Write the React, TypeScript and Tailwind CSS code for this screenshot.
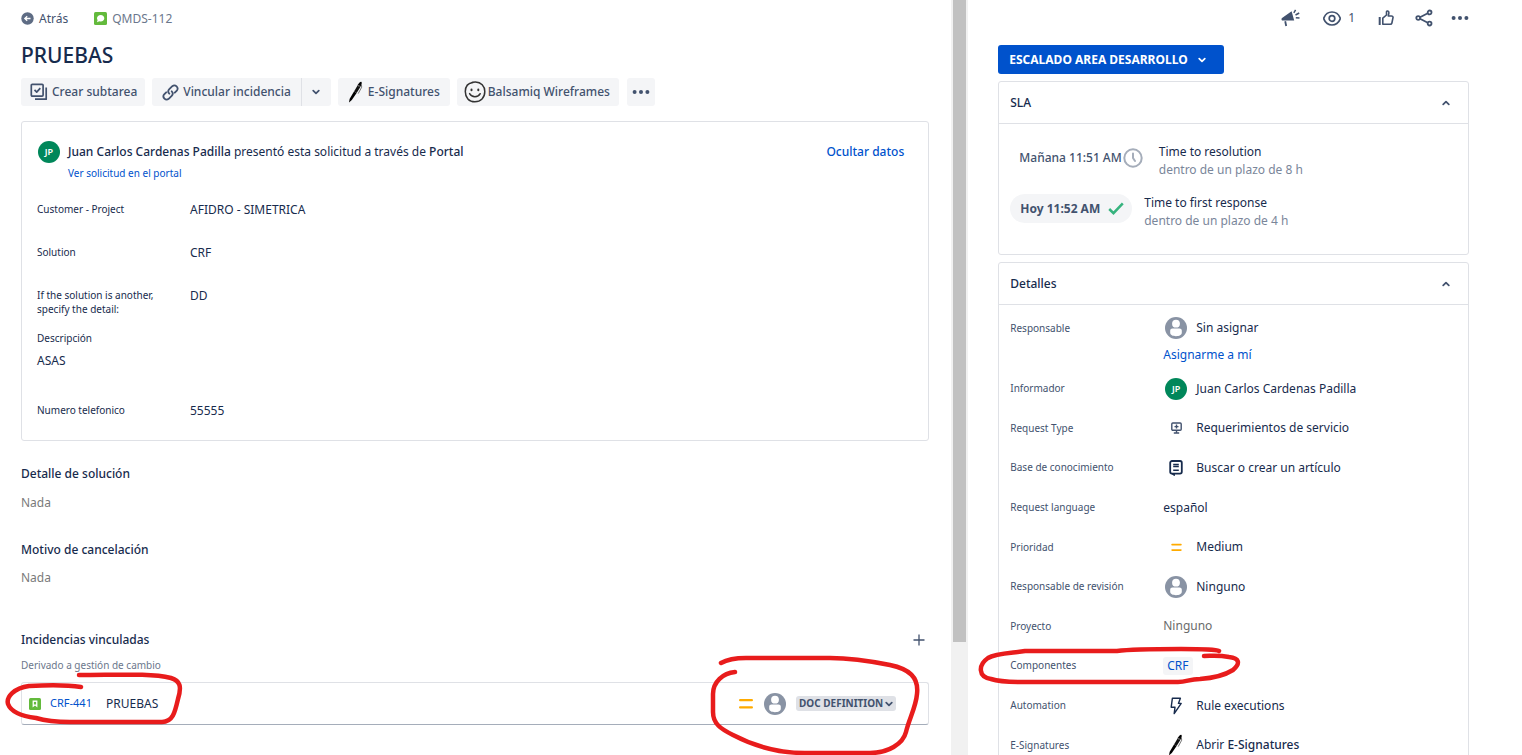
import { useState } from "react";
import type { ReactNode } from "react";

const requestFields = [
  { label: "Customer - Project", value: "AFIDRO - SIMETRICA" },
  { label: "Solution", value: "CRF" },
  { label: "If the solution is another, specify the detail:", value: "DD" },
];

function Chevron({ up = false }: { up?: boolean }) {
  return (
    <svg width="8" height="8" viewBox="0 0 8 8" fill="none" stroke="currentColor" strokeWidth="1.7" strokeLinecap="round" strokeLinejoin="round" aria-hidden="true">
      <path d={up ? "M1.2 5.4 4 2.6l2.8 2.8" : "M1.2 2.6 4 5.4l2.8-2.8"} />
    </svg>
  );
}

function Dots() {
  return (
    <svg width="18" height="6" viewBox="0 0 18 6" fill="currentColor" aria-hidden="true">
      <circle cx="2.6" cy="3" r="2" />
      <circle cx="9" cy="3" r="2" />
      <circle cx="15.4" cy="3" r="2" />
    </svg>
  );
}

function Pen() {
  return (
    <svg width="16" height="22" viewBox="0 0 16 22" aria-hidden="true" className="shrink-0">
      <path d="M1 21.4 1.700 17.800 6 10.600l2.600 1.400-4.800 7z" fill="#000" />
      <path d="M6 10.600 9.400 4.800l2.800 1.400-3.600 5.800z" fill="#111" />
      <path d="M9.400 4.800C10.400 2.400 11.800 1 13.200.8c.8.4.6 1.800.2 3l-1.200 2.400z" fill="#000" />
      <path d="M9.800 4.200 12.600 5.400" stroke="#aaa" strokeWidth=".6" />
      <path d="m13.400 3.600.3 2.600-3.500 6.400" fill="none" stroke="#666" strokeWidth=".9" />
    </svg>
  );
}

function Person() {
  return (
    <svg width="22" height="22" viewBox="0 0 22 22" aria-hidden="true" className="shrink-0">
      <circle cx="11" cy="11" r="11" fill="#8993a4" />
      <circle cx="11" cy="6.700" r="3.900" fill="#fff" />
      <path d="M5.200 13.600c0-1.400 1-2.200 2.300-2.200h7c1.300 0 2.300.8 2.300 2.200v2.200c0 2.200-2.600 3.400-5.800 3.400s-5.800-1.200-5.800-3.400z" fill="#fff" />
    </svg>
  );
}

function Initials() {
  return (
    <span className="flex size-[22px] shrink-0 items-center justify-center rounded-full bg-[#00875a] text-[9px] font-semibold text-white">
      JP
    </span>
  );
}

function Medium({ large = false }: { large?: boolean }) {
  return (
    <svg width={large ? 14 : 11} height={large ? 12 : 9} viewBox="0 0 14 12" stroke="#ffab00" strokeWidth="2.200" strokeLinecap="round" aria-hidden="true">
      <path d="M1.100 2.200h11.800M1.100 9.400h11.800" />
    </svg>
  );
}

function ToolButton({ icon, children, className }: { icon: ReactNode; children: ReactNode; className: string }) {
  return (
    <button type="button" className={`flex h-7 items-center whitespace-nowrap bg-[#f4f5f7] text-[#42526e] hover:bg-[#ebecf0] ${className}`}>
      {icon}
      {children}
    </button>
  );
}

function Panel({ title, children, className = "" }: { title: string; children: ReactNode; className?: string }) {
  const [open, setOpen] = useState(true);

  return (
    <section className={`rounded-[3px] border border-[#dfe1e6] ${className}`}>
      <button
        type="button"
        aria-expanded={open}
        onClick={() => setOpen(!open)}
        className="flex h-[42px] w-full items-center justify-between border-b border-[#dfe1e6] pt-px pr-[18px] pl-[11px] font-medium"
      >
        {title}
        <span className="text-[#42526e]"><Chevron up={open} /></span>
      </button>
      {open && children}
    </section>
  );
}

function Detail({ label, icon, children }: { label: string; icon?: ReactNode; children: ReactNode }) {
  return (
    <div className="flex items-center">
      <dt className="w-[153px] shrink-0 text-[10px] text-[#42526e]">{label}</dt>
      <dd className="flex items-center">
        {icon && <span className="mr-[7px] flex w-[26px] justify-center">{icon}</span>}
        {children}
      </dd>
    </div>
  );
}

function RequestCard() {
  return (
    <section className="mt-[15px] h-80 rounded-[3px] border border-[#dfe1e6] pt-5 pr-6 pl-[15px]">
      <div className="flex h-5 items-center">
        <span className="ml-px"><Initials /></span>
        <p className="ml-2">
          <strong className="font-medium">Juan Carlos Cardenas Padilla</strong> presentó esta solicitud a través de{" "}
          <strong className="font-medium">Portal</strong>
        </p>
        <button type="button" className="ml-auto font-medium text-[#0052cc]">Ocultar datos</button>
      </div>
      <a href="#portal" className="mt-[3px] ml-[31px] block w-fit text-[10px] leading-4 text-[#0052cc]">
        Ver solicitud en el portal
      </a>
      <dl className="mt-[21px]">
        {requestFields.map((field) => (
          <div key={field.label} className="flex h-[43px]">
            <dt className="w-[153px] pr-6 text-[10px] leading-[14px]">{field.label}</dt>
            <dd className="leading-4">{field.value}</dd>
          </div>
        ))}
        <div className="h-[72px]">
          <dt className="text-[10px] leading-[14px]">Descripción</dt>
          <dd className="mt-2 leading-4">ASAS</dd>
        </div>
        <div className="flex">
          <dt className="w-[153px] text-[10px] leading-[14px]">Numero telefonico</dt>
          <dd className="leading-4">55555</dd>
        </div>
      </dl>
    </section>
  );
}

function LinkedIssues() {
  return (
    <section className="mt-[42px]">
      <div className="flex h-5 items-center justify-between">
        <h2 className="font-medium">Incidencias vinculadas</h2>
        <button type="button" aria-label="Vincular incidencia" className="mr-1 text-[#42526e]">
          <svg width="12" height="12" viewBox="0 0 12 12" stroke="currentColor" strokeWidth="1.300" aria-hidden="true">
            <path d="M6 .5v11M.5 6h11" />
          </svg>
        </button>
      </div>
      <h3 className="mt-[7px] text-[10px] leading-4 text-[#6b778c]">Derivado a gestión de cambio</h3>
      <div className="relative mt-[9px] flex h-[43px] items-center rounded-[3px] border border-[#dfe1e6] border-b-[#a5adba] pr-8 pl-[7px]">
        <svg width="12" height="12" viewBox="0 0 12 12" aria-hidden="true">
          <rect width="12" height="12" rx="1.500" fill="#63ba3c" />
          <path d="M3.600 2.500h4.800v7L6 7.500 3.600 9.500z" fill="#fff" />
          <path d="M4.900 3.900h2.200v2.600h-2.200z" fill="#63ba3c" />
        </svg>
        <a href="#CRF-441" className="ml-[9px] w-14 text-[11px] text-[#0052cc]">CRF-441</a>
        <span>PRUEBAS</span>
        <div className="ml-auto flex items-center">
          <Medium large />
          <span className="mr-[10px] ml-[11px]"><Person /></span>
          <button type="button" className="flex h-[15px] items-center gap-[2px] rounded-[3px] bg-[#dfe1e6] px-[3px] text-[10px] font-bold text-[#42526e]">
            DOC DEFINITION
            <Chevron />
          </button>
        </div>
        {/* marker strokes over the linked issue */}
        <svg className="pointer-events-none absolute -top-3 -left-[18px]" width="182" height="56" viewBox="0 0 182 56" fill="none" stroke="#e81c1c" strokeWidth="4.500" strokeLinecap="round" strokeLinejoin="round" aria-hidden="true">
          <path d="M77 16C58 13 42 14 25 15 10 17 2 26 4 33c3 8 13 12 28 14 10 3 22 4 34 4h92c11 0 13-10 16-23 4-13 2-18-7-21-21-5-53-3-92-3" />
        </svg>
        <svg className="pointer-events-none absolute -top-7 right-1" width="214" height="101" viewBox="0 0 214 101" fill="none" stroke="#e81c1c" strokeWidth="4.500" strokeLinecap="round" strokeLinejoin="round" aria-hidden="true">
          <path d="M25 17C13 18 3 27 3 39v18c0 12 8 17 20 23 21 11 43 18 72 18h65c18 0 33-9 36-21 3-13 10-25 11-38 2-17-8-25-27-29-25-5-44-7-60-7H36c-10 0-18 1-25 5" />
        </svg>
      </div>
    </section>
  );
}

function IssueView() {
  return (
    <main className="w-[62.5%] shrink-0 overflow-hidden pt-2 pr-[22px] pl-[21px]">
      <nav className="flex h-5 items-center pt-px">
        <a href="#back" className="flex items-center gap-[5px] text-[#42526e]">
          <svg width="13" height="13" viewBox="0 0 13 13" aria-hidden="true">
            <circle cx="6.500" cy="6.500" r="6.200" fill="#5e6c84" />
            <path d="M9.500 6.500H4M6.200 4.200 3.800 6.500l2.400 2.300" fill="none" stroke="#fff" strokeWidth="1.300" />
          </svg>
          Atrás
        </a>
        <a href="#QMDS-112" className="ml-[26px] flex items-center gap-[5px] text-[#6b778c]">
          <svg width="13" height="13" viewBox="0 0 13 13" aria-hidden="true">
            <rect width="13" height="13" rx="1.500" fill="#63ba3c" />
            <path d="M6.700 3C4.600 3 3 4.400 3 6.200c0 .8.200 1.300.6 1.800L3 10.200l2.300-.9c.4.1.9.2 1.400.2 2.100 0 3.600-1.500 3.600-3.300S8.800 3 6.700 3z" fill="#fff" />
          </svg>
          QMDS-112
        </a>
      </nav>
      <h1 className="mt-[13px] text-[21px] leading-7 font-medium">PRUEBAS</h1>
      <div className="mt-[9px] flex font-medium">
        <ToolButton
          className="rounded-[3px] pr-2 pl-[9px]"
          icon={
            <svg className="mr-1" width="18" height="18" viewBox="0 0 18 18" fill="none" stroke="currentColor" strokeWidth="1.700" strokeLinejoin="round" aria-hidden="true">
              <rect x="1.300" y="1.300" width="11.800" height="11.800" rx="1" />
              <path d="m4.500 6.900 2.200 2.200 3.600-4" />
              <path d="M16.200 4.500v11.700H5" />
            </svg>
          }
        >
          Crear subtarea
        </ToolButton>
        <div className="ml-[7px] flex">
          <ToolButton
            className="rounded-l-[3px] pr-[10px] pl-[10px]"
            icon={
              <svg className="mr-1" width="17" height="17" viewBox="0 0 17 17" fill="none" stroke="currentColor" strokeWidth="1.800" strokeLinecap="round" aria-hidden="true">
                <path d="M7.300 9.700a3.200 3.200 0 0 1 0-4.500l3-3a3.200 3.200 0 0 1 4.500 4.500l-2 2" />
                <path d="M9.700 7.300a3.200 3.200 0 0 1 0 4.500l-3 3a3.200 3.200 0 0 1-4.500-4.500l2-2" />
              </svg>
            }
          >
            Vincular incidencia
          </ToolButton>
          <button type="button" aria-label="Más opciones de vínculo" className="flex h-7 w-[30px] items-center justify-center rounded-r-[3px] border-l border-[#dfe1e6] bg-[#f4f5f7] text-[#42526e]">
            <Chevron />
          </button>
        </div>
        <ToolButton className="ml-[7px] gap-1 rounded-[3px] pr-[10px] pl-[10px]" icon={<Pen />}>
          E-Signatures
        </ToolButton>
        <ToolButton
          className="ml-[7px] gap-[2px] rounded-[3px] pr-[9px] pl-[7px]"
          icon={
            <svg width="22" height="22" viewBox="0 0 22 22" fill="none" stroke="#333" strokeWidth="1.500" strokeLinecap="round" aria-hidden="true">
              <path d="M9 1.500C4 2 1.400 5.500 1.300 10.500 1.300 16.500 5 20.800 10.800 20.800c6 0 10-4 10-10.200C20.800 5 17 1.200 11.500 1.100c-1.500 0-3.500.2-4.700 1" />
              <path d="M5.600 12.600c1.200 2.200 3 3.100 5.300 3.100 2.400 0 4.300-1 5.300-3" />
              <path d="M7.500 8.400v.8M14.300 8.400v.8" strokeWidth="2" />
            </svg>
          }
        >
          Balsamiq Wireframes
        </ToolButton>
        <button type="button" aria-label="Más" className="ml-2 flex h-7 w-7 items-center justify-center rounded-[3px] bg-[#f4f5f7] text-[#42526e]">
          <Dots />
        </button>
      </div>
      <RequestCard />
      <section className="mt-[23px]">
        <h2 className="leading-5 font-medium">Detalle de solución</h2>
        <p className="mt-[9px] leading-5 text-[#7a7a7a]">Nada</p>
      </section>
      <section className="mt-[27px]">
        <h2 className="leading-5 font-medium">Motivo de cancelación</h2>
        <p className="mt-2 leading-5 text-[#7a7a7a]">Nada</p>
      </section>
      <LinkedIssues />
    </main>
  );
}

function Actions() {
  return (
    <div className="flex h-5 items-center justify-end text-[#42526e]">
      <button type="button" aria-label="Enviar comentarios">
        <svg width="19" height="18" viewBox="0 0 19 18" fill="currentColor" aria-hidden="true">
          <path d="M10.600 2.200 13.200 11.600 1 11.600C.2 10.800.3 9.400 1.400 8.800z" />
          <path d="M4.200 12.200 5.200 17" stroke="currentColor" strokeWidth="1.800" />
          <path d="m12.800 3.800 1.800-3M14.500 6l3.700-2M14.800 8.800l3.700.3" stroke="currentColor" strokeWidth="1.500" />
        </svg>
      </button>
      <button type="button" aria-label="Observar" className="ml-[23px] flex items-center gap-[7px]">
        <svg width="18" height="15" viewBox="0 0 18 15" fill="none" stroke="currentColor" strokeWidth="1.700" aria-hidden="true">
          <path d="M9 1C5 1 2.300 3.500 1 6.600c-.2.600-.2 1.200 0 1.800C2.300 11.500 5 14 9 14s6.700-2.500 8-5.600c.2-.6.200-1.200 0-1.800C15.700 3.500 13 1 9 1z" />
          <circle cx="9" cy="7.500" r="2.800" />
        </svg>
        1
      </button>
      <button type="button" aria-label="Votar" className="ml-[23px]">
        <svg width="16" height="16" viewBox="0 0 16 16" fill="none" stroke="currentColor" strokeWidth="1.600" strokeLinejoin="round" aria-hidden="true">
          <path d="M1.700 7v8" strokeWidth="2" />
          <path d="M4.800 14.300V8.200L8.500 5V2c0-1.400 2.400-1.300 2.400.8L10.300 6h3.200c1 0 1.700.7 1.500 1.600l-1.100 5.400c-.2.900-.8 1.300-1.600 1.300z" />
        </svg>
      </button>
      <button type="button" aria-label="Compartir" className="ml-[21px]">
        <svg width="18" height="18" viewBox="0 0 18 18" fill="none" stroke="currentColor" strokeWidth="1.800" aria-hidden="true">
          <circle cx="3.200" cy="9" r="1.900" />
          <circle cx="14.600" cy="3.400" r="1.900" />
          <circle cx="14.600" cy="14.600" r="1.900" />
          <path d="m5 8.200 7.800-4M5 9.800l7.800 4" />
        </svg>
      </button>
      <button type="button" aria-label="Más acciones" className="ml-[18px]"><Dots /></button>
    </div>
  );
}

function SlaPanel() {
  return (
    <Panel title="SLA" className="mt-[7px]">
      <ul className="h-[130px] pt-[19px] pl-[11px] leading-[18px]">
        <li className="flex">
          <div className="flex h-[29px] items-center gap-px pl-[9px] font-medium text-[#42526e]">
            Mañana 11:51 AM
            <svg width="20" height="20" viewBox="0 0 20 20" fill="none" stroke="#a5adba" strokeWidth="2" strokeLinecap="round" aria-hidden="true">
              <circle cx="10" cy="10" r="8.700" />
              <path d="M10 5.500V10l2 3" />
            </svg>
          </div>
          <div className="ml-4">
            <p>Time to resolution</p>
            <p className="text-[#7a869a]">dentro de un plazo de 8 h</p>
          </div>
        </li>
        <li className="mt-[15px] flex">
          <div className="flex h-[29px] items-center gap-2 rounded-full bg-[#f4f5f7] pr-2 pl-[10px] font-bold text-[#42526e]">
            Hoy 11:52 AM
            <svg width="16" height="13" viewBox="0 0 16 13" fill="none" stroke="#36b37e" strokeWidth="2.500" aria-hidden="true">
              <path d="m1.200 7 4.300 4.200L14.800 1.300" />
            </svg>
          </div>
          <div className="ml-3">
            <p>Time to first response</p>
            <p className="text-[#7a869a]">dentro de un plazo de 4 h</p>
          </div>
        </li>
      </ul>
    </Panel>
  );
}

function DetailsPanel() {
  return (
    <Panel title="Detalles" className="relative mt-[7px]">
      <dl className="pt-[10px] pb-6 pl-[11px]">
        <div className="flex h-[54px] pt-[2px]">
          <dt className="w-[153px] text-[10px] leading-[22px] text-[#42526e]">Responsable</dt>
          <dd>
            <span className="flex items-center">
              <span className="mr-[7px] flex w-[26px] justify-center"><Person /></span>
              Sin asignar
            </span>
            <button type="button" className="mt-[6px] block leading-5 text-[#0052cc]">Asignarme a mí</button>
          </dd>
        </div>
        <div className="grid h-[396px] auto-rows-fr">
          <Detail label="Informador" icon={<Initials />}>Juan Carlos Cardenas Padilla</Detail>
          <Detail
            label="Request Type"
            icon={
              <svg width="11" height="12" viewBox="0 0 11 12" fill="none" stroke="#42526e" strokeWidth="1.400" aria-hidden="true">
                <rect x=".8" y="1" width="9.400" height="7.200" rx="1" />
                <path d="M5.500 2.600v4M3.500 4.600h4M5.500 8.200v2.400M2.800 11h5.400" />
              </svg>
            }
          >
            Requerimientos de servicio
          </Detail>
          <Detail
            label="Base de conocimiento"
            icon={
              <svg width="14" height="16" viewBox="0 0 14 16" fill="none" stroke="#172b4d" strokeWidth="1.800" aria-hidden="true">
                <rect x="1.200" y="1" width="11.600" height="12.600" rx="1.800" />
                <path d="M4.200 4.400h5.600M4.200 6.500h5.600M4.200 10.200h5.600" strokeWidth="1.500" />
                <path d="M2.500 13.600h3v2.200z" strokeWidth=".8" fill="#172b4d" />
              </svg>
            }
          >
            Buscar o crear un artículo
          </Detail>
          <Detail label="Request language">español</Detail>
          <Detail label="Prioridad" icon={<Medium />}>Medium</Detail>
          <Detail label="Responsable de revisión" icon={<Person />}>Ninguno</Detail>
          <Detail label="Proyecto"><span className="text-[#6b6b6b]">Ninguno</span></Detail>
          <Detail label="Componentes">
            <a href="#CRF" className="rounded-[3px] bg-[#f4f5f7] px-1 leading-[18px] text-[#0052cc]">CRF</a>
          </Detail>
          <Detail
            label="Automation"
            icon={
              <svg width="12" height="18" viewBox="0 0 12 18" fill="none" stroke="#172b4d" strokeWidth="1.400" strokeLinejoin="round" aria-hidden="true">
                <path d="M2.400 1.200h8L8.400 6.400h2.800L4.200 16.600l.8-6.400H1.200z" />
              </svg>
            }
          >
            Rule executions
          </Detail>
          <Detail label="E-Signatures" icon={<Pen />}>
            Abrir&nbsp;<strong className="font-medium">E-Signatures</strong>
          </Detail>
        </div>
      </dl>
      {/* marker stroke around the component row */}
      <svg className="pointer-events-none absolute top-[383px] -left-[22px]" width="264" height="42" viewBox="0 0 264 42" fill="none" stroke="#e81c1c" strokeWidth="4.500" strokeLinecap="round" strokeLinejoin="round" aria-hidden="true">
        <path d="M242 5C238 3 218 3 204 3 172 3 155 3 140 5H48C37 7 19 7 11 12 1 19 1 31 14 33c9 3 18 3 29 3h158c9 0 11-3 22-3 14-1 25-4 33-9 8-7 6-12-4-13-11-2-17-1-25-1" />
      </svg>
    </Panel>
  );
}

export default function App() {
  return (
    <div className="flex h-screen overflow-hidden bg-white font-['Noto_Sans','Segoe_UI',sans-serif] text-[12px] text-[#172b4d]">
      <IssueView />
      <div className="w-[17px] shrink-0 bg-[#f1f1f1] px-[2px]" aria-hidden="true">
        <div className="h-[85%] bg-[#c1c1c1]" />
      </div>
      <aside className="min-w-0 flex-1 pt-2 pr-[53px] pl-[30px]">
        <Actions />
        <button type="button" className="mt-[17px] flex h-[29px] items-center gap-[10px] rounded-[3px] bg-[#0052cc] pr-[18px] pl-[11px] font-bold text-white">
          ESCALADO AREA DESARROLLO
          <Chevron />
        </button>
        <SlaPanel />
        <DetailsPanel />
      </aside>
    </div>
  );
}
